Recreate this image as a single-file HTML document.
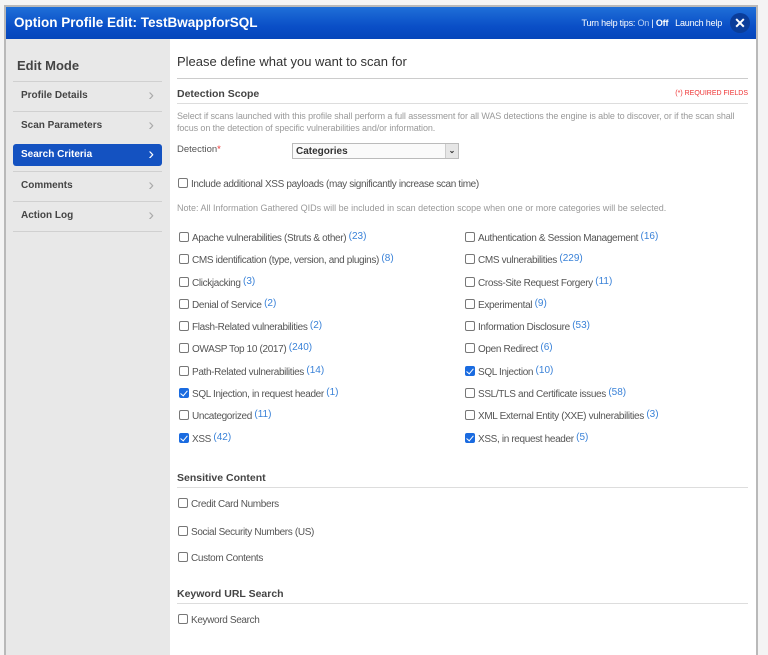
<!DOCTYPE html>
<html><head><meta charset="utf-8"><style>
*{margin:0;padding:0;box-sizing:border-box}
body{width:768px;height:649px;overflow:hidden;background:#f4f4f4;font-family:"Liberation Sans",Arial,sans-serif;position:relative}
.modal{position:absolute;left:4px;top:5px;width:754px;height:650px;border:2px solid #b9b9b9;border-bottom:none;background:#fff}
.hdr{position:absolute;left:0;top:0;right:0;height:32px;background:linear-gradient(#1f6fd8,#0a4fc7 60%,#0546bb);color:#fff}
.hdr .t{position:absolute;left:8px;top:8px;font-size:13.5px;font-weight:bold}
.hdr .r{position:absolute;right:34px;top:11px;font-size:9px;letter-spacing:-0.2px}
.hdr .r .on{color:#b8cff3}
.hdr .x{position:absolute;right:6px;top:6px;width:20px;height:20px;border-radius:50%;background:#0a3d9a;color:#fff;font-weight:bold;font-size:14px;text-align:center;line-height:20px}
.side{position:absolute;left:0;top:32px;width:164px;bottom:0;background:#e8e8e8}
.side h2{position:absolute;left:11px;top:19px;font-size:13px;font-weight:bold;color:#444}
.item{position:absolute;left:7px;width:149px;height:30px;border-top:1px solid #d0d0d0;font-size:10px;font-weight:bold;color:#444;padding:8px 0 0 8px}
.item::after{content:"›";position:absolute;right:8px;top:3px;font-size:17px;color:#aaa;font-weight:normal}
.item.sel{background:#1452c1;color:#fff;border-radius:3px;height:22px;padding-top:5px;border:none}
.item.sel::after{color:#fff;top:0}
.item.end::after{content:none}
.c{position:absolute;left:171px;right:8px;top:32px;bottom:0}
.ab{position:absolute;font-size:10px;letter-spacing:-0.35px;color:#555;white-space:nowrap}
.cb{display:inline-block;width:10px;height:10px;border:1px solid #777;border-radius:2px;vertical-align:-1px;margin-right:3px;background:#fff;position:relative}
.cb.k{background:#1a6be0;border-color:#1a6be0}
.cb.k::after{content:"";position:absolute;left:2px;top:0px;width:3px;height:6px;border:solid #fff;border-width:0 1.5px 1.5px 0;transform:rotate(40deg)}
.n{color:#3a82d8;font-size:10px;vertical-align:2px;letter-spacing:0}
.hd{position:absolute;left:0;right:0;font-size:10.5px;font-weight:bold;color:#444;border-bottom:1px solid #ddd;padding-bottom:3px}
</style></head><body>
<div class="modal">
<div class="hdr"><div class="t">Option Profile Edit: TestBwappforSQL</div>
<div class="r">Turn help tips: <span class="on">On</span> | <b>Off</b> &nbsp; Launch help</div><div class="x">✕</div></div>
<div class="side"><h2>Edit Mode</h2>
<div class="item" style="top:42px">Profile Details</div>
<div class="item" style="top:72px">Scan Parameters</div>
<div class="item sel" style="top:105px">Search Criteria</div>
<div class="item" style="top:132px">Comments</div>
<div class="item" style="top:162px">Action Log</div>
<div class="item end" style="top:192px"></div>
</div>
<div class="c">
<div style="position:absolute;left:0;right:0;top:15px;font-size:13px;color:#333;border-bottom:1px solid #ccc;padding-bottom:9px">Please define what you want to scan for</div>
<div class="hd" style="top:49px">Detection Scope<span style="position:absolute;right:0;top:2px;font-size:7px;color:#e33;font-weight:normal">(*) REQUIRED FIELDS</span></div>
<div class="ab" style="left:0;top:71px;font-size:9px;letter-spacing:-0.1px;color:#999;line-height:12px;white-space:normal;width:575px">Select if scans launched with this profile shall perform a full assessment for all WAS detections the engine is able to discover, or if the scan shall focus on the detection of specific vulnerabilities and/or information.</div>
<div class="ab" style="left:0;top:105px;font-size:9.5px;letter-spacing:0">Detection<span style="color:#e33">*</span></div>
<div style="position:absolute;left:115px;top:104px;width:167px;height:16px;border:1px solid #bbb;font-size:10px;font-weight:bold;color:#333;padding:2px 0 0 3px;background:#fafafa">Categories<span style="position:absolute;right:0;top:0;width:13px;height:14px;background:#e6e6e6;border-left:1px solid #ccc;font-size:8px;text-align:center;line-height:14px">⌄</span></div>
<div class="ab" style="left:1px;top:139px"><span class="cb"></span>Include additional XSS payloads (may significantly increase scan time)</div>
<div class="ab" style="left:0;top:164px;font-size:9px;letter-spacing:0;color:#999">Note: All Information Gathered QIDs will be included in scan detection scope when one or more categories will be selected.</div>
<div class="ab" style="left:2px;top:192px"><span class="cb"></span>Apache vulnerabilities (Struts &amp; other) <span class="n">(23)</span></div>
<div class="ab" style="left:2px;top:214px"><span class="cb"></span>CMS identification (type, version, and plugins) <span class="n">(8)</span></div>
<div class="ab" style="left:2px;top:237px"><span class="cb"></span>Clickjacking <span class="n">(3)</span></div>
<div class="ab" style="left:2px;top:259px"><span class="cb"></span>Denial of Service <span class="n">(2)</span></div>
<div class="ab" style="left:2px;top:281px"><span class="cb"></span>Flash-Related vulnerabilities <span class="n">(2)</span></div>
<div class="ab" style="left:2px;top:303px"><span class="cb"></span>OWASP Top 10 (2017) <span class="n">(240)</span></div>
<div class="ab" style="left:2px;top:326px"><span class="cb"></span>Path-Related vulnerabilities <span class="n">(14)</span></div>
<div class="ab" style="left:2px;top:348px"><span class="cb k"></span>SQL Injection, in request header <span class="n">(1)</span></div>
<div class="ab" style="left:2px;top:370px"><span class="cb"></span>Uncategorized <span class="n">(11)</span></div>
<div class="ab" style="left:2px;top:393px"><span class="cb k"></span>XSS <span class="n">(42)</span></div>
<div class="ab" style="left:288px;top:192px"><span class="cb"></span>Authentication &amp; Session Management <span class="n">(16)</span></div>
<div class="ab" style="left:288px;top:214px"><span class="cb"></span>CMS vulnerabilities <span class="n">(229)</span></div>
<div class="ab" style="left:288px;top:237px"><span class="cb"></span>Cross-Site Request Forgery <span class="n">(11)</span></div>
<div class="ab" style="left:288px;top:259px"><span class="cb"></span>Experimental <span class="n">(9)</span></div>
<div class="ab" style="left:288px;top:281px"><span class="cb"></span>Information Disclosure <span class="n">(53)</span></div>
<div class="ab" style="left:288px;top:303px"><span class="cb"></span>Open Redirect <span class="n">(6)</span></div>
<div class="ab" style="left:288px;top:326px"><span class="cb k"></span>SQL Injection <span class="n">(10)</span></div>
<div class="ab" style="left:288px;top:348px"><span class="cb"></span>SSL/TLS and Certificate issues <span class="n">(58)</span></div>
<div class="ab" style="left:288px;top:370px"><span class="cb"></span>XML External Entity (XXE) vulnerabilities <span class="n">(3)</span></div>
<div class="ab" style="left:288px;top:393px"><span class="cb k"></span>XSS, in request header <span class="n">(5)</span></div>
<div class="hd" style="top:433px">Sensitive Content</div>
<div class="ab" style="left:1px;top:459px"><span class="cb"></span>Credit Card Numbers</div>
<div class="ab" style="left:1px;top:487px"><span class="cb"></span>Social Security Numbers (US)</div>
<div class="ab" style="left:1px;top:513px"><span class="cb"></span>Custom Contents</div>
<div class="hd" style="top:549px">Keyword URL Search</div>
<div class="ab" style="left:1px;top:575px"><span class="cb"></span>Keyword Search</div>
</div>
</div>
</body></html>
